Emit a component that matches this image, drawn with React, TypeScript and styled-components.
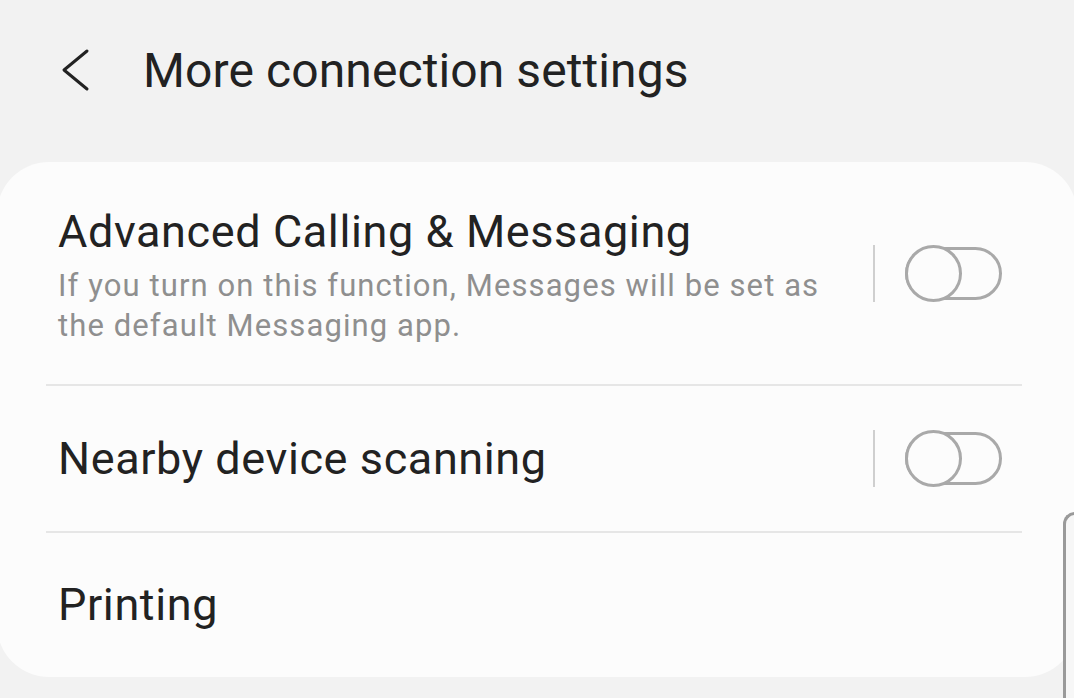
import styled, { createGlobalStyle } from 'styled-components';

const GlobalStyle = createGlobalStyle`
  html, body {
    margin: 0;
    padding: 0;
    background: #f2f2f2;
    font-family: Roboto, "Noto Sans", sans-serif;
    overflow: hidden;
  }
`;

const Screen = styled.div`
  position: relative;
  width: 1074px;
  height: 698px;
  overflow: hidden;
  background: #f2f2f2;
`;

const Header = styled.div`
  display: flex;
  align-items: center;
  height: 140px;
  padding: 0 0 0 60px;
  gap: 51px;
  box-sizing: border-box;
`;

const BackButton = styled.button`
  display: flex;
  align-items: center;
  justify-content: center;
  width: 32px;
  height: 44px;
  padding: 0;
  border: none;
  background: none;
`;

const Title = styled.h1`
  margin: 0;
  font-size: 48px;
  font-weight: 400;
  color: #222;
  letter-spacing: 0.1px;
`;

const Card = styled.div`
  margin: 22px -3px 0;
  background: #fcfcfc;
  border-radius: 52px;
  padding: 0 55px 0 49px;
`;

const Row = styled.div<{ $height: number; $divider?: boolean }>`
  display: flex;
  align-items: center;
  height: ${(p) => p.$height}px;
  border-bottom: ${(p) => (p.$divider ? '2px solid #e6e6e6' : 'none')};
  box-sizing: border-box;
`;

const RowText = styled.div<{ $sub?: boolean }>`
  flex: 1;
  display: flex;
  flex-direction: column;
  padding: ${(p) => (p.$sub ? '4px 0 0 12px' : '0 0 0 12px')};
`;

const RowTitle = styled.div`
  font-size: 45px;
  color: #222;
  line-height: 56px;
  letter-spacing: 0.6px;
`;

const RowSub = styled.div`
  font-size: 31px;
  color: #8f8f8f;
  line-height: 40px;
  margin-top: 6px;
  letter-spacing: 1.1px;
`;

const Separator = styled.div`
  width: 2px;
  height: 57px;
  background: #cfcfcf;
  margin-right: 30px;
`;

const Toggle = styled.div`
  position: relative;
  width: 97px;
  height: 57px;
  margin-right: 20px;
  display: flex;
  align-items: center;
`;

const Track = styled.div`
  width: 97px;
  height: 53px;
  border: 3px solid #a9a9a9;
  border-radius: 27px;
  box-sizing: border-box;
`;

const Knob = styled.div`
  position: absolute;
  left: 0;
  top: 0;
  width: 57px;
  height: 57px;
  border: 3px solid #a9a9a9;
  border-radius: 50%;
  background: #fcfcfc;
  box-sizing: border-box;
`;

const ScrollHint = styled.div`
  position: absolute;
  left: 1063px;
  top: 512px;
  width: 20px;
  height: 200px;
  border-left: 3px solid #9a9a9a;
  border-top: 3px solid #9a9a9a;
  border-top-left-radius: 12px;
  background: #f7f7f7;
  box-sizing: border-box;
`;

const Switch = () => (
  <Toggle>
    <Track />
    <Knob />
  </Toggle>
);

export default function App() {
  return (
    <Screen>
      <GlobalStyle />
      <Header>
        <BackButton aria-label="Back">
          <svg width="32" height="44" viewBox="0 0 32 44">
            <path d="M27 3 L4 22 L27 41" fill="none" stroke="#222" strokeWidth="3" strokeLinecap="round" strokeLinejoin="round" />
          </svg>
        </BackButton>
        <Title>More connection settings</Title>
      </Header>
      <Card>
        <Row $height={224} $divider>
          <RowText $sub>
            <RowTitle>Advanced Calling &amp; Messaging</RowTitle>
            <RowSub>
              If you turn on this function, Messages will be set as
              <br />
              the default Messaging app.
            </RowSub>
          </RowText>
          <Separator />
          <Switch />
        </Row>
        <Row $height={147} $divider>
          <RowText>
            <RowTitle>Nearby device scanning</RowTitle>
          </RowText>
          <Separator />
          <Switch />
        </Row>
        <Row $height={144}>
          <RowText>
            <RowTitle>Printing</RowTitle>
          </RowText>
        </Row>
      </Card>
      <ScrollHint />
    </Screen>
  );
}
